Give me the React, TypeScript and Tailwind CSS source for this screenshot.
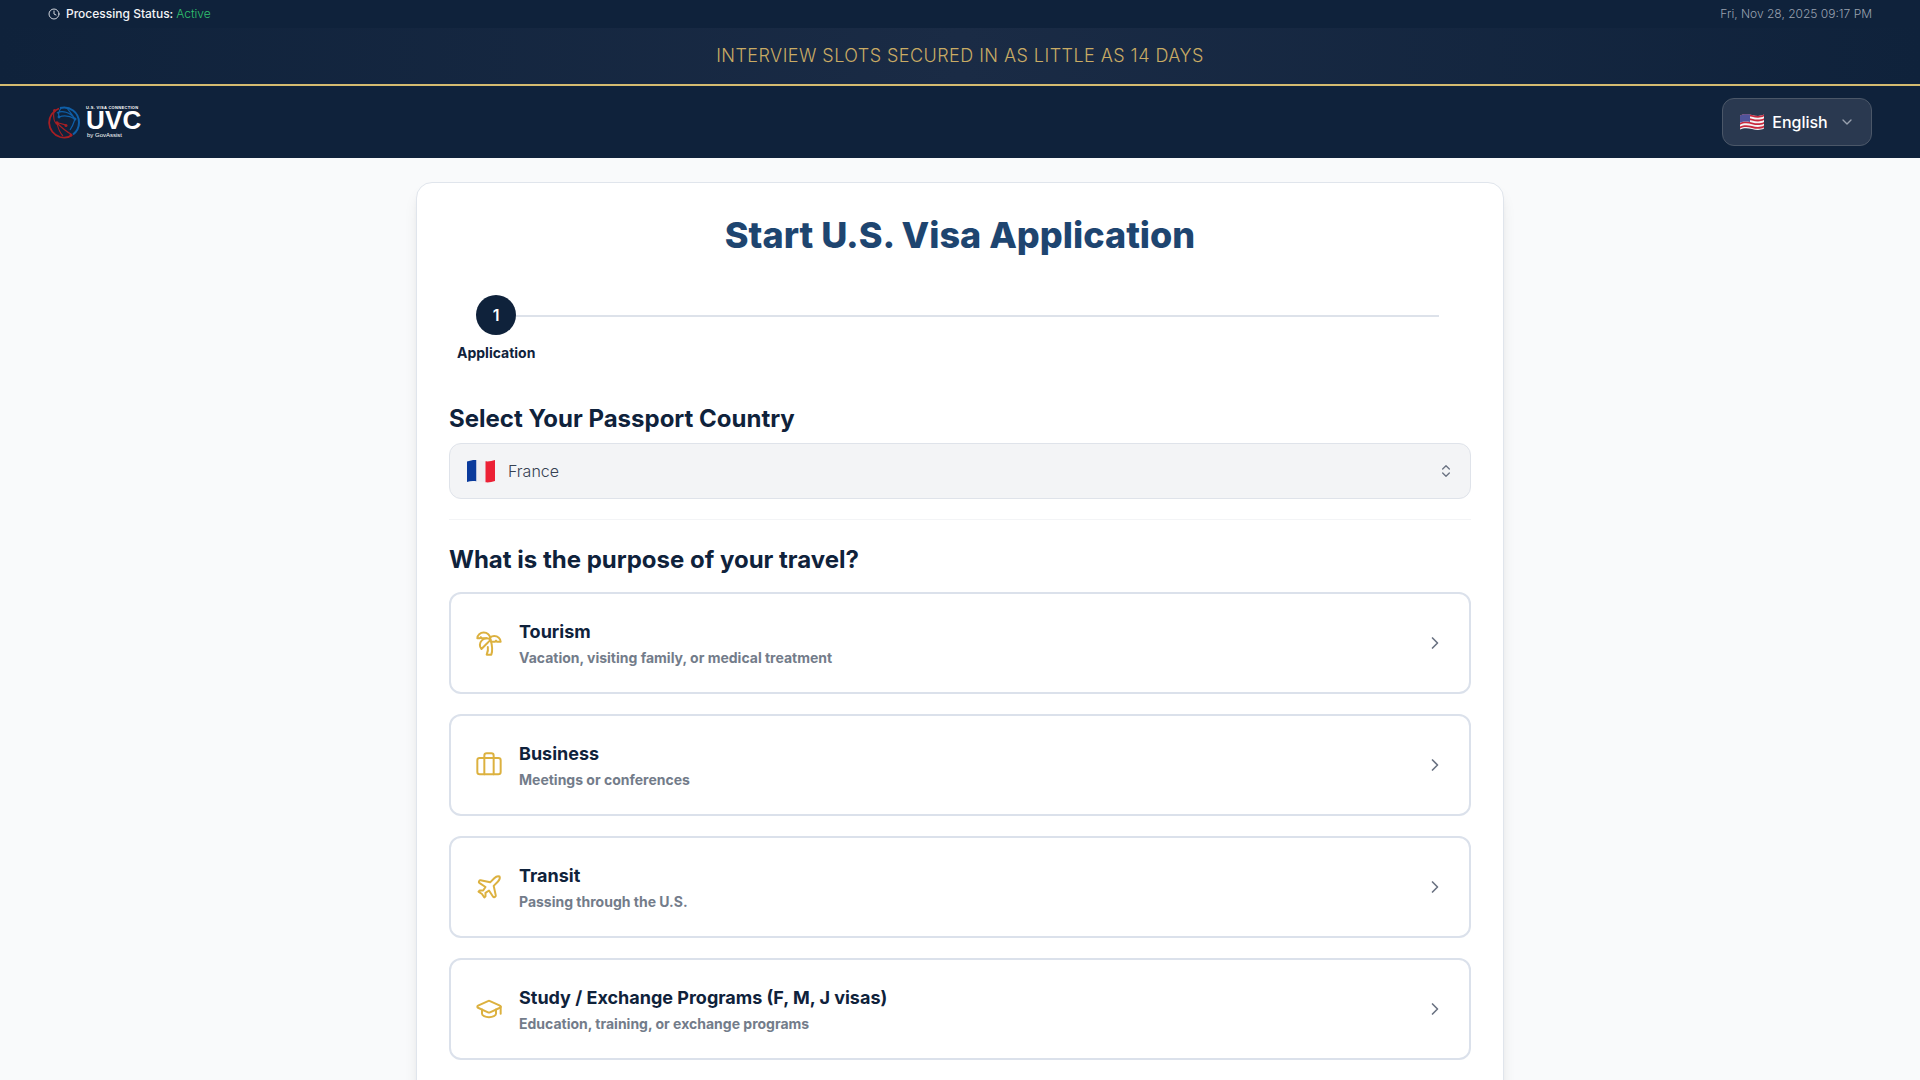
import React from 'react';
import { Briefcase, ChevronDown, ChevronRight, ChevronsUpDown, Clock, GraduationCap, Plane, TreePalm } from 'lucide-react';

const purposes = [
  { icon: TreePalm, title: 'Tourism', desc: 'Vacation, visiting family, or medical treatment' },
  { icon: Briefcase, title: 'Business', desc: 'Meetings or conferences' },
  { icon: Plane, title: 'Transit', desc: 'Passing through the U.S.' },
  { icon: GraduationCap, title: 'Study / Exchange Programs (F, M, J visas)', desc: 'Education, training, or exchange programs' },
];

const UsFlag = () => (
  <svg width="24" height="18" viewBox="0 0 24 18" className="shrink-0">
    <path d="M0 2.5C4 0.5 8 1 12 2s8 1.5 12-.5v14c-4 2-8 1.5-12 .5s-8-1.5-12 .5z" fill="#f4f4f6" />
    <path d="M0 2.5C4 .5 8 1 12 2s8 1.5 12-.5v1.8c-4 2-8 1.500-12 .5S4 2.300 0 4.300z" fill="#c8283c" />
    <path d="M0 6.200c4-2 8-1.500 12-.5s8 1.500 12-.5V7c-4 2-8 1.500-12 .5S4 6 0 8z" fill="#c8283c" />
    <path d="M0 9.900c4-2 8-1.500 12-.5s8 1.500 12-.5v1.800c-4 2-8 1.500-12 .5s-8-1.500-12 .5z" fill="#c8283c" />
    <path d="M0 13.600c4-2 8-1.500 12-.5s8 1.500 12-.5v1.800c-4 2-8 1.500-12 .5s-8-1.500-12 .5z" fill="#c8283c" />
    <path d="M0 2.500C3 1 6 .9 10 1.600v7.300C6 8.200 3 8.300 0 9.800z" fill="#50549a" />
  </svg>
);

const FrFlag = () => (
  <svg width="30" height="24" viewBox="0 0 30 24" className="shrink-0">
    <path d="M1 2.500C4 1.500 7 .8 10.500 1v21.300C7 21.800 4 22 1 23z" fill="#0a3a9c" />
    <path d="M10.500 1c3 .2 6 1 9 1.300v21c-3-.3-6-.6-9-1z" fill="#eeeef2" />
    <path d="M19.500 2.300c3.500.3 6.500-.3 9.500-1.300v21c-3 1-6 1.600-9.500 1.300z" fill="#ec2136" />
  </svg>
);

const Logo = () => (
  <div className="flex items-center gap-[5px]">
    <svg width="33" height="33" viewBox="0 0 33 33" fill="none" className="shrink-0">
      <path d="M12 2a15 15 0 0 1 19 14.500 15 15 0 0 1-6 12" stroke="#0f5fa8" strokeWidth="2" />
      <path d="M9 7C14 4 22 6 27 13M13 2c-2 3-3 6-2 9 5-2 11-1 16 2-1 3-2 7-5 11M19 2c2 3 5 6 8 11" stroke="#0f5fa8" strokeWidth="1.200" />
      <path d="M11 2.500A15 15 0 0 0 12 31c4 1 9 .5 12-2" stroke="#a61f24" strokeWidth="1.800" />
      <path d="M6 5c-1 6 0 12 3 12s8 2 9 2M9 17c1 5 3 10 6 13M9 17c4 4 8 8 14 11" stroke="#a61f24" strokeWidth="1.100" />
      <circle cx="6.500" cy="4.500" r="1.500" fill="#a61f24" />
      <circle cx="9" cy="17" r="1.700" fill="#a61f24" />
      <circle cx="18" cy="19.500" r="1.500" fill="#a61f24" />
      <circle cx="23" cy="29" r="1.500" fill="#a61f24" />
      <circle cx="27" cy="13" r="1.500" fill="#0f5fa8" />
      <circle cx="11" cy="11" r="1.400" fill="#0f5fa8" />
    </svg>
    <div className="flex flex-col text-white font-['Liberation_Sans',sans-serif]">
      <span className="text-[4px] leading-[5px] font-bold tracking-[0.32px] whitespace-nowrap">U.S. VISA CONNECTION</span>
      <span className="text-[26px] leading-[21px] font-bold tracking-[0.2px]">UVC</span>
      <span className="text-[6px] leading-[8px] whitespace-nowrap pl-[1px]">by GovAssist</span>
    </div>
  </div>
);

export default function App() {
  return (
    <div className="h-screen overflow-hidden bg-[#f9fafb] font-['Inter',sans-serif]">
      <div className="h-7 bg-[#0f223b] px-12 flex items-center justify-between text-xs">
        <div className="flex items-center gap-[6px]">
          <Clock className="w-3 h-3 text-gray-300" />
          <span className="text-gray-100 font-medium">Processing Status:</span>
          <span className="text-[#2fc46f] -ml-[3px] font-light">Active</span>
        </div>
        <span className="text-gray-400 font-light">Fri, Nov 28, 2025 09:17 PM</span>
      </div>

      <div className="h-[58px] bg-gradient-to-r from-[#0f223b] via-[#1a2b45] to-[#0f223b] border-b-2 border-[#d4bb70] flex items-center justify-center">
        <span className="text-lg font-light text-[#c9ab64] tracking-[0.45px]">INTERVIEW SLOTS SECURED IN AS LITTLE AS 14 DAYS</span>
      </div>

      <div className="h-[72px] bg-[#0f223b] px-12 flex items-center justify-between">
        <Logo />
        <button className="h-12 w-[150px] pl-[17px] pr-[16px] flex items-center justify-between rounded-xl border border-[#4b5768] bg-[#2a3950] text-white">
          <UsFlag />
          <span className="font-medium -ml-[3px]">English</span>
          <ChevronDown className="w-4 h-4 text-gray-400" />
        </button>
      </div>

      <div className="flex justify-center pt-6">
        <div className="w-[1088px] h-[1200px] bg-white rounded-2xl border border-[#e0e5ec] shadow-lg p-8">
          <h1 className="text-4xl font-extrabold text-center text-[#1e4570] leading-[40px]">Start U.S. Visa Application</h1>

          <div className="mt-[40px] px-2 h-[75px] pr-8">
            <div className="flex items-start">
              <div className="flex flex-col items-center shrink-0">
                <div className="w-10 h-10 rounded-full bg-[#0f223b] text-white flex items-center justify-center font-semibold">1</div>
                <span className="mt-[8px] text-sm font-bold text-[#0f223b]">Application</span>
              </div>
              <div className="flex-1 h-[2px] mt-5 -ml-[19px] bg-[#dde2ea]" />
            </div>
          </div>

          <h2 className="text-2xl font-bold text-[#0f223b] mt-[33px] leading-8">Select Your Passport Country</h2>
          <div className="mt-[8px] h-[56px] rounded-xl border border-[#dfe3ea] bg-gray-100 px-4 flex items-center justify-between">
            <div className="flex items-center gap-[12px]">
              <FrFlag />
              <span className="text-gray-700 font-light">France</span>
            </div>
            <ChevronsUpDown className="w-4 h-4 text-gray-500" />
          </div>
          <div className="mt-[20px] h-px bg-gray-100" />

          <h2 className="text-2xl font-bold text-[#0f223b] mt-6 leading-8">What is the purpose of your travel?</h2>
          <div className="mt-[16px] flex flex-col gap-5">
            {purposes.map((p) => (
              <div key={p.title} className="h-[102px] rounded-xl border-2 border-[#dbe1eb] bg-white px-6 flex items-center gap-4">
                <p.icon className="w-7 h-7 text-[#dcb13f] shrink-0" strokeWidth={1.7} />
                <div className="flex-1">
                  <div className="text-lg font-bold text-[#0f223b] leading-7">{p.title}</div>
                  <div className="text-sm font-bold text-[#737c8a] leading-5 mt-[2px]">{p.desc}</div>
                </div>
                <ChevronRight className="w-5 h-5 text-gray-500 shrink-0" />
              </div>
            ))}
          </div>
        </div>
      </div>
    </div>
  );
}
